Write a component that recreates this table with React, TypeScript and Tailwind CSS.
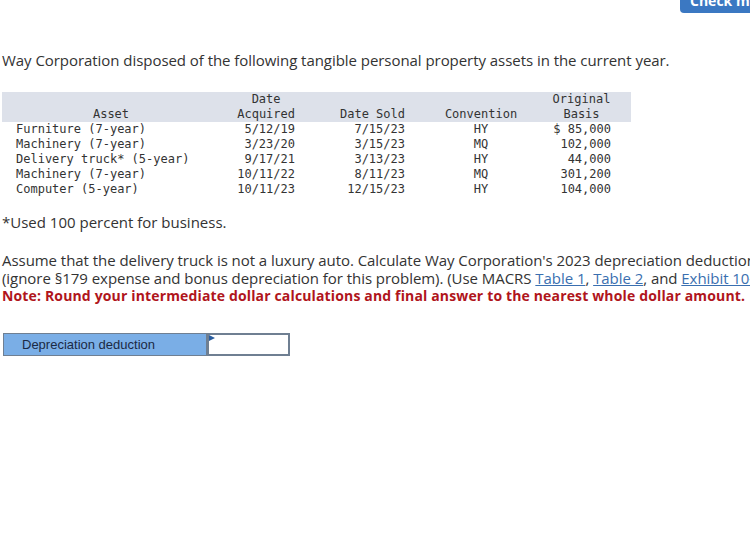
import React from "react";

const rows = [
  ["Furniture (7-year)", "5/12/19", "7/15/23", "HY", "$ 85,000"],
  ["Machinery (7-year)", "3/23/20", "3/15/23", "MQ", "102,000"],
  ["Delivery truck* (5-year)", "9/17/21", "3/13/23", "HY", "44,000"],
  ["Machinery (7-year)", "10/11/22", "8/11/23", "MQ", "301,200"],
  ["Computer (5-year)", "10/11/23", "12/15/23", "HY", "104,000"],
];

export default function App() {
  return (
    <div className="relative w-[750px] h-[533px] bg-white overflow-hidden text-[#333]" style={{ fontFamily: '"Open Sans", sans-serif' }}>
      <div className="absolute right-0 top-[-12px] w-[70px] h-[25px] bg-[#3b78c2] rounded-bl-[4px] text-white font-bold text-[14px] pl-[10px] pt-[2px] whitespace-nowrap overflow-hidden">
        Check m
      </div>
      <div className="pt-[50px] pl-[2px]">
        <p className="text-[15px] leading-[20px] tracking-[-0.05px] whitespace-nowrap">Way Corporation disposed of the following tangible personal property assets in the current year.</p>
        <div className="mt-[22px] w-[629px] text-[12px] leading-[15px] text-[#333] whitespace-pre" style={{ fontFamily: '"DejaVu Sans Mono", monospace' }}>
          <div className="flex bg-[#dde1ea] h-[30px] items-end">
            <div className="w-[218px] text-center">Asset</div>
            <div className="w-[80px] pr-[5px] flex justify-end"><div className="text-center">Date<br />Acquired</div></div>
            <div className="w-[110px] text-right pr-[5px]">Date Sold</div>
            <div className="w-[142px] text-center">Convention</div>
            <div className="w-[79px] pr-[20px] text-center">Original<br />Basis</div>
          </div>
          {rows.map((r, i) => (
            <div key={i} className="flex h-[15px] first:mt-[1px]">
              <div className="w-[218px] pl-[14px]">{r[0]}</div>
              <div className="w-[80px] text-right pr-[5px]">{r[1]}</div>
              <div className="w-[110px] text-right pr-[5px]">{r[2]}</div>
              <div className="w-[142px] text-center">{r[3]}</div>
              <div className="w-[79px] text-right pr-[20px]">{r[4]}</div>
            </div>
          ))}
        </div>
        <p className="mt-[15px] text-[15px] leading-[20px]">*Used 100 percent for business.</p>
        <div className="mt-[19px] text-[15px] leading-[18px] whitespace-nowrap tracking-[-0.05px]">
          <p>Assume that the delivery truck is not a luxury auto. Calculate Way Corporation's 2023 depreciation deduction</p>
          <p>(ignore §179 expense and bonus depreciation for this problem). (Use MACRS <span className="text-[#3a6fb0] underline">Table 1</span>, <span className="text-[#3a6fb0] underline">Table 2</span>, and <span className="text-[#3a6fb0] underline">Exhibit 10-</span></p>
          <p className="font-bold text-[#b0151c] text-[14px] tracking-[0.15px]">Note: Round your intermediate dollar calculations and final answer to the nearest whole dollar amount.</p>
        </div>
        <div className="mt-[28px] ml-[1px] flex h-[23px] w-[287px]">
          <div className="w-[204px] bg-[#7aaee6] border border-[#6f7f92] text-[13px] text-[#1b2a44] pl-[18px] leading-[21px]" style={{ fontFamily: '"Liberation Sans", Arial, sans-serif' }}>
            Depreciation deduction
          </div>
          <div className="relative w-[83px] bg-white border-2 border-[#6f7f92]">
            <svg className="absolute left-0 top-0" width="6" height="7" viewBox="0 0 6 7"><polygon points="0,0 6,3 0,6" fill="#2a5d9f" /></svg>
          </div>
        </div>
      </div>
    </div>
  );
}
